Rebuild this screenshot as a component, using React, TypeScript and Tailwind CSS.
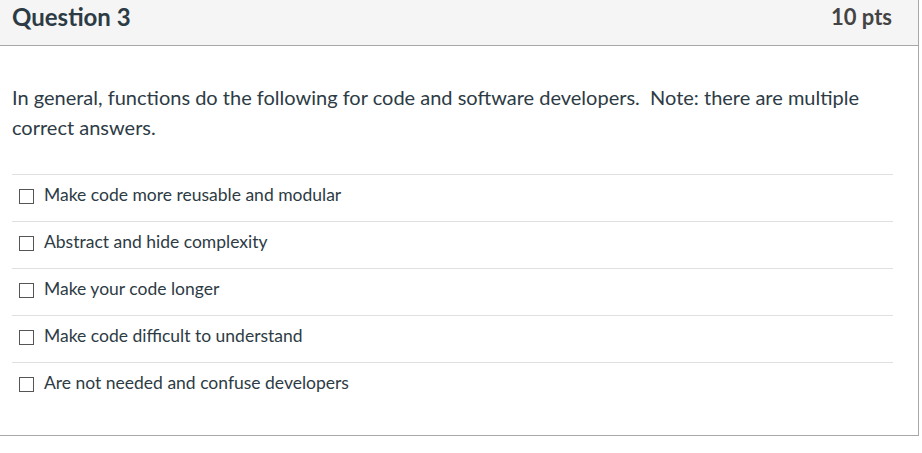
const answers = [
  "Make code more reusable and modular",
  "Abstract and hide complexity",
  "Make your code longer",
  "Make code difficult to understand",
  "Are not needed and confuse developers",
];

export default function App() {
  return (
    <div className="min-h-[453px] bg-white font-['Lato','Liberation_Sans',sans-serif] text-[#2d3b45]">
      <div className="w-[919px] border-r border-b border-[#a8a8a8]">
        <div className="flex h-[46px] items-start justify-between border-b border-[#a8a8a8] bg-[#f5f5f5] pl-3 pr-[26px] pt-[2px]">
          <h2 className="text-[24px] font-bold leading-[30px]">Question 3</h2>
          <span className="pt-[1px] text-[22px] font-bold leading-[28px] text-[#444]">10 pts</span>
        </div>

        <div className="pl-3 pr-[25px] pb-[26px] pt-[36px]">
          <p className="text-[20px] leading-[30px]">
            In general, functions do the following for code and software developers.&nbsp; Note: there are multiple correct answers.
          </p>

          <div className="mt-[32px]">
            {answers.map((a) => (
              <label
                key={a}
                className="flex h-[47px] items-start gap-[10px] border-t border-[#e0e0e0] pl-[7px] pt-[8px]"
              >
                <span className="mt-[6px] h-[15px] w-[15px] shrink-0 border border-[#555] bg-white" />
                <span className="text-[17.5px] leading-[24px]">{a}</span>
              </label>
            ))}
          </div>
        </div>
      </div>
    </div>
  );
}
